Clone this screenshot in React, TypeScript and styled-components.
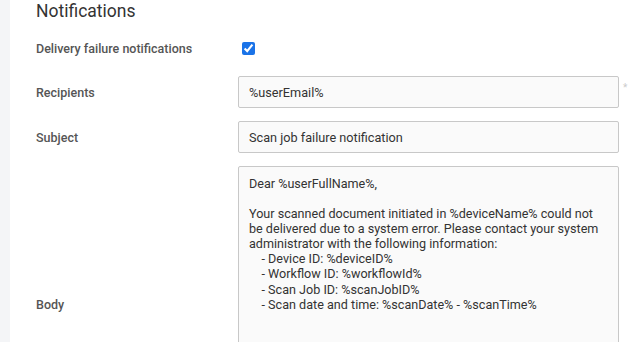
import React from "react";
import styled, { createGlobalStyle } from "styled-components";

const GlobalStyle = createGlobalStyle`
  html, body {
    margin: 0;
    padding: 0;
    background: #ffffff;
    font-family: Roboto, "Liberation Sans", Arial, sans-serif;
    overflow: hidden;
  }
`;

const Page = styled.div`
  display: flex;
  height: 342px;
`;

const SideStrip = styled.div`
  width: 10px;
  flex: 0 0 10px;
  background: #f4f5f7;
`;

const Section = styled.section`
  flex: 1;
  padding: 0 0 0 26px;
`;

const Title = styled.h2`
  margin: 0;
  font-size: 17.5px;
  font-weight: 400;
  color: #333333;
  line-height: 22px;
`;

const Form = styled.div`
  display: grid;
  grid-template-columns: 202px 381px 12px;
  grid-template-rows: 30px 32px 32px auto;
  row-gap: 13px;
  margin-top: 11px;
`;

const Label = styled.label`
  display: flex;
  align-items: center;
  font-size: 12.5px;
  font-weight: 500;
  color: #555555;
`;

const Field = styled.div<{ $tall?: boolean }>`
  display: flex;
  align-items: ${(p) => (p.$tall ? "stretch" : "center")};
`;

const Check = styled.input`
  width: 13px;
  height: 13px;
  margin: 0 0 0 4px;
  accent-color: #1a73e8;
`;

const TextInput = styled.input`
  box-sizing: border-box;
  width: 100%;
  height: 32px;
  padding: 0 10px;
  border: 1px solid #c8c8c8;
  border-radius: 2px;
  background: #fafafa;
  font-family: inherit;
  font-size: 12.7px;
  color: #333333;
  outline: none;
`;

const BodyEditor = styled.div`
  box-sizing: border-box;
  width: 100%;
  height: 276px;
  padding: 9px 10px;
  border: 1px solid #c8c8c8;
  border-radius: 2px;
  background: #fafafa;
  color: #333333;
  font-size: 12.6px;
  line-height: 15px;
  outline: none;
  white-space: pre-wrap;
`;

const Greeting = styled.div`
  margin-bottom: 15px;
`;

const Paragraph = styled.div``;

const InfoLine = styled.div`
  line-height: 15.3px;
`;

const Required = styled.span`
  padding: 6px 0 0 4px;
  font-size: 10px;
  color: #cccccc;
  align-self: flex-start;
`;

const Spacer = styled.span``;

const infoLines = [
  "Device ID: %deviceID%",
  "Workflow ID: %workflowId%",
  "Scan Job ID: %scanJobID%",
  "Scan date and time: %scanDate% - %scanTime%",
];

export default function App() {
  return (
    <>
      <GlobalStyle />
      <Page>
        <SideStrip />
        <Section>
          <Title>Notifications</Title>
          <Form>
            <Label>Delivery failure notifications</Label>
            <Field>
              <Check type="checkbox" defaultChecked />
            </Field>
            <Spacer />

            <Label>Recipients</Label>
            <Field>
              <TextInput defaultValue="%userEmail%" />
            </Field>
            <Required>*</Required>

            <Label>Subject</Label>
            <Field>
              <TextInput defaultValue="Scan job failure notification" />
            </Field>
            <Spacer />

            <Label>Body</Label>
            <Field $tall>
              <BodyEditor contentEditable suppressContentEditableWarning>
                <Greeting>Dear %userFullName%,</Greeting>
                <Paragraph>
                  Your scanned document initiated in %deviceName% could not be
                  delivered due to a system error. Please contact your system
                  administrator with the following information:
                </Paragraph>
                {infoLines.map((line) => (
                  <InfoLine key={line}>{"    - " + line}</InfoLine>
                ))}
              </BodyEditor>
            </Field>
            <Spacer />
          </Form>
        </Section>
      </Page>
    </>
  );
}
